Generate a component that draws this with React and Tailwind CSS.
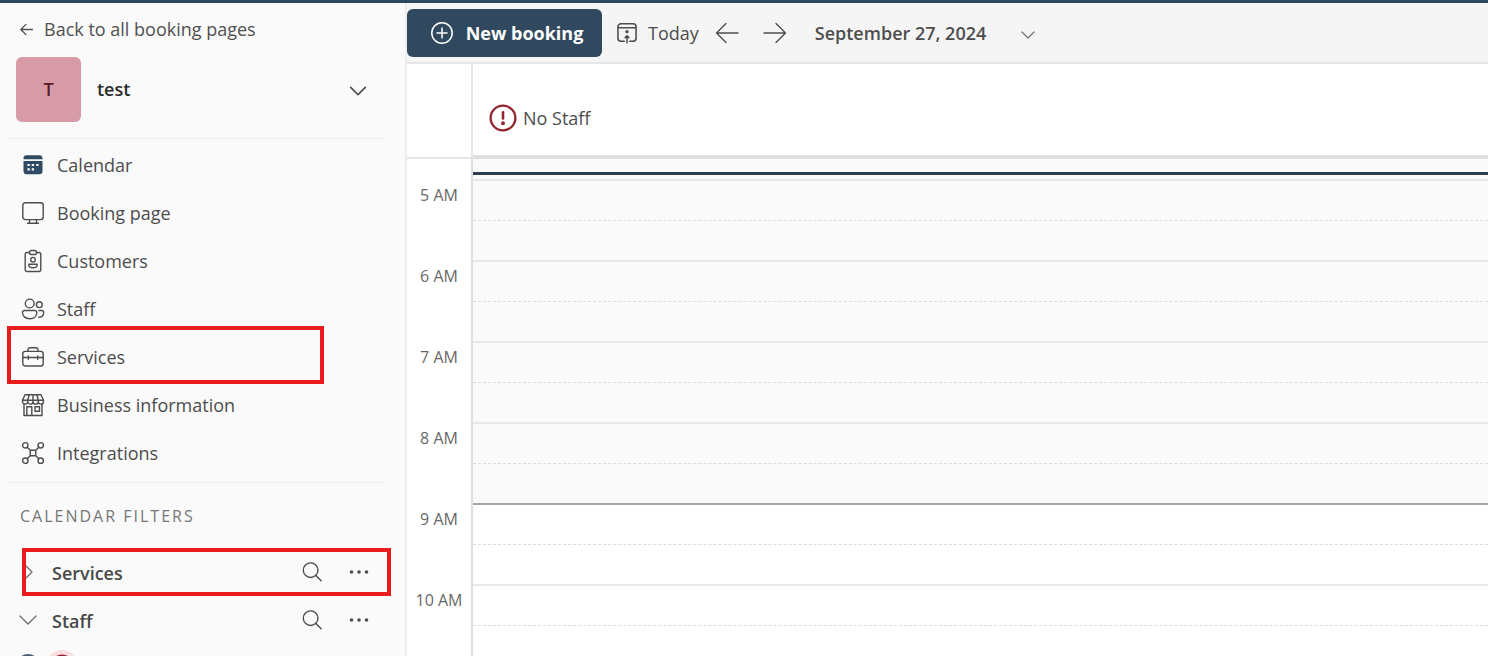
import React from 'react';

// Shared wrapper for the outlined icons
const Icon = ({ children, className = "size-6", strokeWidth = 1.4, viewBox = "0 0 24 24" }) => (
  <svg
    className={`shrink-0 ${className}`}
    viewBox={viewBox}
    fill="none"
    stroke="currentColor"
    strokeWidth={strokeWidth}
    strokeLinecap="round"
    strokeLinejoin="round"
    aria-hidden="true"
  >
    {children}
  </svg>
);

const ArrowLeftIcon = (props) => (
  <Icon {...props}>
    <path d="M23 12H1.5M11 2.5 1.5 12l9.5 9.5" />
  </Icon>
);

const ArrowRightIcon = (props) => (
  <Icon {...props}>
    <path d="M1 12h21.5M13 2.5 22.5 12 13 21.5" />
  </Icon>
);

const ChevronDownIcon = (props) => (
  <Icon {...props}>
    <path d="M4 8l8 8 8-8" />
  </Icon>
);

const ChevronRightIcon = (props) => (
  <Icon {...props}>
    <path d="M8 4l8 8-8 8" />
  </Icon>
);

const SearchIcon = (props) => (
  <Icon {...props}>
    <circle cx="10.5" cy="10" r="8" />
    <path d="M16.3 15.8 22 21.5" />
  </Icon>
);

const MoreIcon = () => (
  <svg className="size-6" viewBox="0 0 24 24" fill="currentColor" aria-hidden="true">
    <circle cx="4.5" cy="12" r="1.8" />
    <circle cx="12" cy="12" r="1.8" />
    <circle cx="19.5" cy="12" r="1.8" />
  </svg>
);

const CalendarIcon = () => (
  <svg className="size-6 shrink-0 text-[#2f4a63]" viewBox="0 0 24 24" fill="currentColor" aria-hidden="true">
    <path d="M2.5 6.3V5.2A3 3 0 0 1 5.5 2.3h13a3 3 0 0 1 3 2.9v1.1z" />
    <path
      fillRule="evenodd"
      d="M2.5 8h19v10a3.2 3.2 0 0 1-3.2 3.2H5.7A3.2 3.2 0 0 1 2.5 18zM6.4 11v2.1h2.4V11zm4.3 0v2.1h2.4V11zm4.5 0v2.1h2.4V11zm-8.8 4.3v2.1h2.4v-2.1zm4.3 0v2.1h2.4v-2.1z"
    />
  </svg>
);

const MonitorIcon = () => (
  <Icon>
    <rect x="1.8" y="1.8" width="20.4" height="16.8" rx="2.5" />
    <path d="M8.5 19v3.2M15.5 19v3.2M6.5 22.3h11" />
  </Icon>
);

const BadgeIcon = () => (
  <Icon>
    <path d="M8.5 3.5H6A1.8 1.8 0 0 0 4.2 5.3v15.4A1.8 1.8 0 0 0 6 22.5h12a1.8 1.8 0 0 0 1.8-1.8V5.3A1.8 1.8 0 0 0 18 3.5h-2.5" />
    <rect x="8.5" y="1.5" width="7" height="4" rx="1.8" />
    <circle cx="12" cy="10.7" r="2.3" />
    <path d="M7.8 15.3h8.4v.8c0 1.7-1.8 2.7-4.2 2.7s-4.2-1-4.2-2.7z" />
  </Icon>
);

const PeopleIcon = () => (
  <Icon>
    <circle cx="8.7" cy="6.5" r="4.4" />
    <circle cx="18.3" cy="7.7" r="2.9" />
    <path d="M3.5 13.5h10.3a2 2 0 0 1 2 2c0 4-3 6.3-7.1 6.3s-7.2-2.3-7.2-6.3a2 2 0 0 1 2-2z" />
    <path d="M18 13.5h2.7a2 2 0 0 1 2 2c0 3.2-2.2 4.9-5.2 4.6" />
  </Icon>
);

const ToolboxIcon = () => (
  <Icon>
    <rect x="1.8" y="6.4" width="20.4" height="14.6" rx="2.5" />
    <path d="M7 6.2V4.6A2 2 0 0 1 9 2.8h6a2 2 0 0 1 2 1.8v1.6M1.8 12.5h20.4M7.3 11v3.2M16.7 11v3.2" />
  </Icon>
);

const StoreIcon = () => (
  <Icon>
    <path d="M4 1.8h16l2.5 5.5v1.2a2.6 2.6 0 0 1-5.2 0 2.6 2.6 0 0 1-5.3 0 2.6 2.6 0 0 1-5.3 0 2.6 2.6 0 0 1-5.2 0V7.3zM1.5 7.3h21M8.2 1.8 6.7 7.3v1.2M12 1.8v6.7M15.8 1.8l1.5 5.5v1.2" />
    <path d="M3 11v11.5h18V11M5.8 22.3v-8.5h5v8.5M14 13.8h4.5v4.5H14z" />
  </Icon>
);

const IntegrationsIcon = () => (
  <Icon>
    <circle cx="4.3" cy="4.3" r="2.7" />
    <circle cx="19.7" cy="4.3" r="2.7" />
    <circle cx="4.3" cy="19.7" r="2.7" />
    <circle cx="19.7" cy="19.7" r="2.7" />
    <rect x="9.2" y="9.2" width="5.6" height="5.6" rx="1" />
    <path d="M6.2 6.2l3.3 3.3M17.8 6.2l-3.3 3.3M6.2 17.8l3.3-3.3M17.8 17.8l-3.3-3.3" />
  </Icon>
);

const TodayIcon = () => (
  <Icon className="size-[22px]" strokeWidth={1.7}>
    <path d="M9 21H5.3a3.2 3.2 0 0 1-3.2-3.2V5.2A3.2 3.2 0 0 1 5.3 2h13.4a3.2 3.2 0 0 1 3.2 3.2v12.6a3.2 3.2 0 0 1-3.2 3.2H15M2.1 6.3h19.8M12 15.5v7M10 17l2-2 2 2" />
    <circle cx="12" cy="10.5" r="1" fill="currentColor" />
  </Icon>
);

const AddCircleIcon = () => (
  <Icon strokeWidth={1.5}>
    <circle cx="12" cy="12" r="10.2" />
    <path d="M12 7v10M7 12h10" />
  </Icon>
);

const AlertIcon = ({ className = "size-7" }) => (
  <Icon className={className} strokeWidth={2}>
    <circle cx="12" cy="12" r="10.6" />
    <path d="M12 7v5.5" strokeWidth="2.2" />
    <circle cx="12" cy="16.5" r="0.7" fill="currentColor" />
  </Icon>
);

const navItems = [
  { label: "Calendar", icon: CalendarIcon },
  { label: "Booking page", icon: MonitorIcon },
  { label: "Customers", icon: BadgeIcon },
  { label: "Staff", icon: PeopleIcon },
  { label: "Services", icon: ToolboxIcon, highlighted: true },
  { label: "Business information", icon: StoreIcon },
  { label: "Integrations", icon: IntegrationsIcon },
];

const filters = [
  { label: "Services", open: false, highlighted: true },
  { label: "Staff", open: true },
];

const hours = [
  { label: "5 AM", closed: true },
  { label: "6 AM", closed: true },
  { label: "7 AM", closed: true },
  { label: "8 AM", closed: true },
  { label: "9 AM", opening: true },
  { label: "10 AM" },
];

const Sidebar = () => (
  <aside className="w-[407px] shrink-0 overflow-hidden border-r-2 border-[#ededed] bg-[#fafafa] pr-5 pl-2">
    <a href="#pages" className="flex h-[53px] items-center gap-2 pl-3 text-[#505050]">
      <ArrowLeftIcon className="size-[13px]" strokeWidth={2.4} />
      <span className="pb-0.5 pl-[3px]">Back to all booking pages</span>
    </a>

    <button type="button" className="flex h-[66px] w-full items-center pr-4 pl-2">
      <span className="flex size-[65px] items-center justify-center rounded-md bg-[#d79ba7] text-lg font-semibold text-[#5a1a28]">
        T
      </span>
      <span className="flex-1 pl-4 text-left font-semibold text-[#2b2b2b]">test</span>
      <ChevronDownIcon className="mt-1 size-[22px] text-[#505050]" strokeWidth={1.8} />
    </button>

    <nav className="mt-4 border-y border-[#ececec] pt-0.5 pb-[5px]">
      <ul>
        {navItems.map(({ label, icon: ItemIcon, highlighted }) => (
          <li key={label} className="relative">
            <a href={`#${label}`} className="flex h-12 items-center gap-3 pl-[13px]">
              <ItemIcon />
              <span>{label}</span>
            </a>
            {highlighted && (
              <span className="pointer-events-none absolute -top-[7px] -left-px h-[58px] w-[317px] border-4 border-[#e81c1c]" />
            )}
          </li>
        ))}
      </ul>
    </nav>

    <h2 className="pt-[21px] pl-3 text-base tracking-[2px] text-[#767676]">CALENDAR FILTERS</h2>

    <div className="pt-5">
      {filters.map(({ label, open, highlighted }) => (
        <div key={label} className="relative flex h-12 items-center pl-2">
          <button type="button" className="flex flex-1 items-center gap-3 font-semibold text-[#484848]">
            {open ? (
              <ChevronDownIcon className="size-6 text-[#6a6a6a]" strokeWidth={1.2} />
            ) : (
              <ChevronRightIcon className="size-6 text-[#6a6a6a]" strokeWidth={1.2} />
            )}
            <span className="pt-0.5">{label}</span>
          </button>
          <button type="button" aria-label={`Search ${label}`} className="mr-6">
            <SearchIcon className="size-[22px]" strokeWidth={1.5} />
          </button>
          <button type="button" aria-label={`${label} options`} className="mr-3.5">
            <MoreIcon />
          </button>
          {highlighted && (
            <span className="pointer-events-none absolute inset-y-0 -right-1.5 left-3.5 border-4 border-[#e81c1c]" />
          )}
        </div>
      ))}

      <div className="flex items-center gap-1.5 pt-1.5 pl-2">
        <Icon className="size-6 text-[#4c6075]" strokeWidth={2}>
          <circle cx="12" cy="12" r="11" />
        </Icon>
        <span className="flex size-8 items-center justify-center rounded-full bg-[#fbdfe1] text-[#96202b]">
          <AlertIcon className="size-6" />
        </span>
      </div>
    </div>
  </aside>
);

const Toolbar = () => (
  <header className="flex h-[61px] items-center border-b-2 border-[#e6e6e6] bg-[#f5f5f5]">
    <button
      type="button"
      className="flex h-12 w-[195px] items-center justify-center gap-3 rounded-md bg-[#31495e] pl-1 font-bold text-white"
    >
      <AddCircleIcon />
      New booking
    </button>
    <button type="button" className="ml-3.5 flex items-center gap-2.5">
      <TodayIcon />
      Today
    </button>
    <button type="button" aria-label="Previous day" className="ml-4">
      <ArrowLeftIcon className="size-6" strokeWidth={1.3} />
    </button>
    <button type="button" aria-label="Next day" className="ml-6">
      <ArrowRightIcon className="size-6" strokeWidth={1.3} />
    </button>
    <button type="button" className="ml-7 flex items-center font-semibold">
      <span className="w-[204px] text-left">September 27, 2024</span>
      <ChevronDownIcon className="mt-1 size-[18px] text-[#707070]" strokeWidth={1.6} />
    </button>
  </header>
);

const Schedule = () => (
  <div className="bg-white">
    <div className="flex h-[95px]">
      <div className="w-[66px] shrink-0 border-r-2 border-b-2 border-[#e6e6e6]" />
      <div className="flex flex-1 items-center gap-1.5 border-b-4 border-[#e0e0e0] pt-4 pl-4">
        <AlertIcon className="size-7 text-[#93242e]" />
        No Staff
      </div>
    </div>

    {/* current time marker */}
    <div className="flex h-5">
      <div className="w-[66px] shrink-0 border-r-2 border-[#dedede]" />
      <div className="flex-1 bg-[#fafafa] pt-[13px]">
        <div className="h-[3px] bg-[#2d3e4e]" />
      </div>
    </div>

    {hours.map(({ label, closed, opening }) => (
      <div key={label} className="flex h-[81px]">
        <div className="w-[66px] shrink-0 border-r-2 border-[#dedede] pt-1 text-center text-base text-[#686868]">
          {label}
        </div>
        <div
          className={`flex-1 ${closed ? "bg-[#fafafa]" : "bg-white"} ${
            opening ? "border-t-2 border-[#a6a6a6]" : "border-t-2 border-[#e8e8e8]"
          }`}
        >
          <div className="h-10 border-b border-dashed border-[#dcdcdc]" />
        </div>
      </div>
    ))}
  </div>
);

export default function App() {
  return (
    <div className="flex h-screen flex-col overflow-hidden border-t-[3px] border-[#2f475c] font-['Open_Sans','Noto_Sans',sans-serif] text-lg/6 text-[#4d4d4d]">
      <div className="flex min-h-0 flex-1">
        <Sidebar />
        <main className="min-w-0 flex-1 overflow-hidden">
          <Toolbar />
          <Schedule />
        </main>
      </div>
    </div>
  );
}
